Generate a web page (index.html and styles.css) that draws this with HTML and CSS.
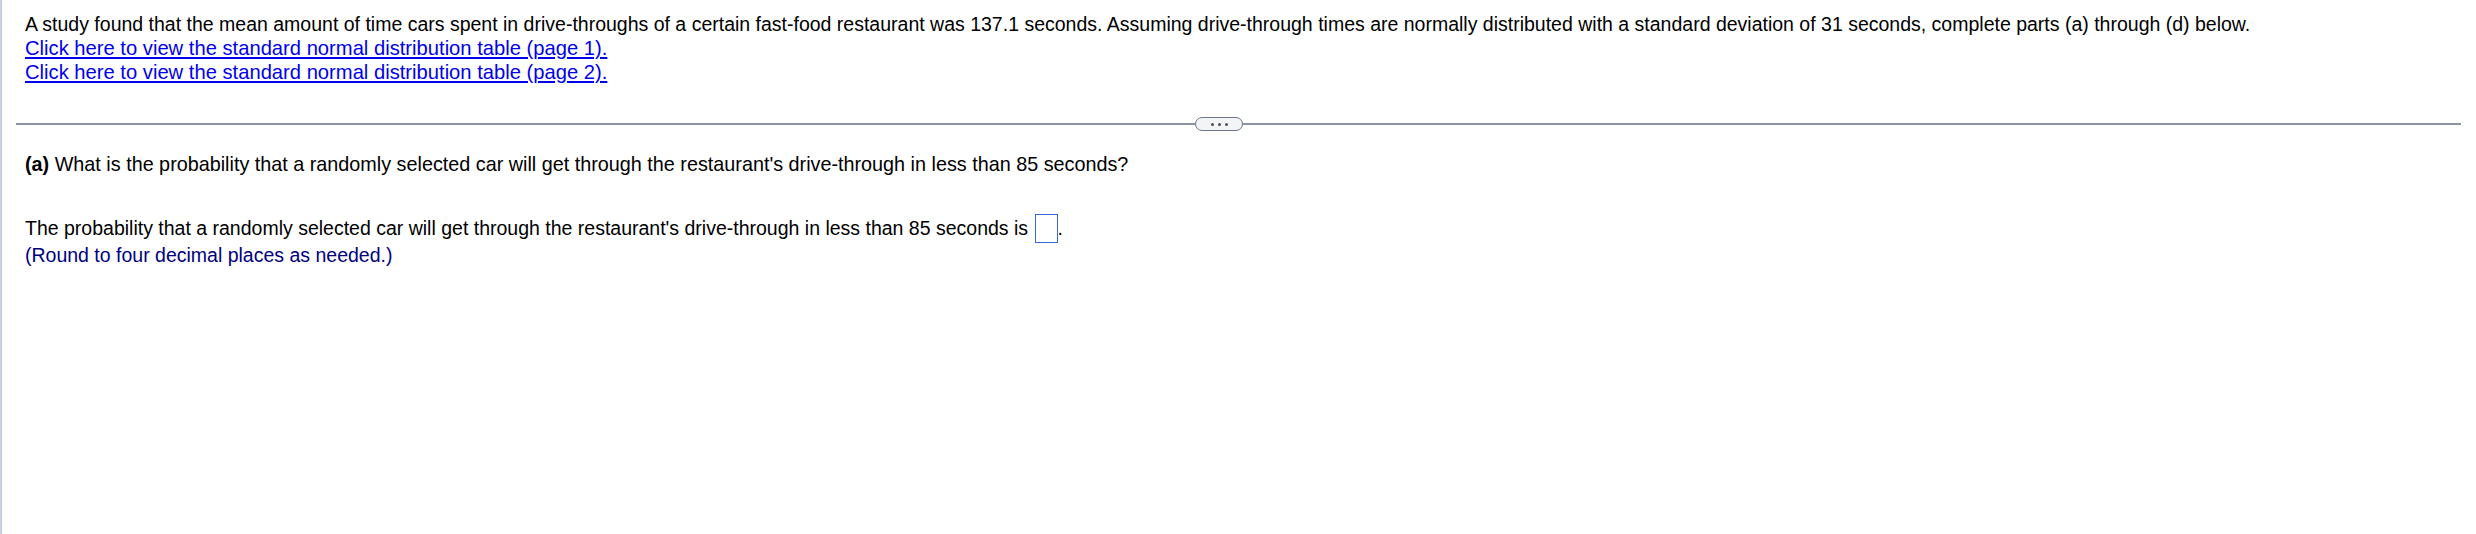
FILE: index.html
```html
<!DOCTYPE html>
<html>
<head>
<meta charset="utf-8">
<link rel="stylesheet" href="styles.css">
</head>
<body>
<div class="page">
  <div class="intro">
    <p class="stem">A study found that the mean amount of time cars spent in drive-throughs of a certain fast-food restaurant was 137.1 seconds. Assuming drive-through times are normally distributed with a standard deviation of 31 seconds, complete parts (a) through (d) below.</p>
    <a class="link" href="#">Click here to view the standard normal distribution table (page 1).</a>
    <a class="link" href="#">Click here to view the standard normal distribution table (page 2).</a>
  </div>
  <div class="divider">
    <span class="rule rule-left"></span>
    <span class="pill"><span class="dot"></span><span class="dot"></span><span class="dot"></span></span>
    <span class="rule rule-right"></span>
  </div>
  <div class="part">
    <p class="question"><b>(a)</b> What is the probability that a randomly selected car will get through the restaurant's drive-through in less than 85 seconds?</p>
    <p class="answer">The probability that a randomly selected car will get through the restaurant's drive-through in less than 85 seconds is <span class="box"></span>.</p>
    <p class="hint">(Round to four decimal places as needed.)</p>
  </div>
</div>
</body>
</html>
```
FILE: styles.css
```css
html, body {
  margin: 0;
  padding: 0;
  background: #ffffff;
}
body {
  font-family: "Liberation Sans", Arial, sans-serif;
  font-size: 19.5px;
  color: #000000;
}
.page {
  min-height: 534px;
  box-sizing: border-box;
  border-left: 2px solid #c9cde0;
  padding: 12px 15px 0 0;
}
.intro {
  padding-left: 23px;
  display: flex;
  flex-direction: column;
  line-height: 24px;
}
.stem {
  margin: 0;
}
.link {
  font-size: 20.2px;
  color: #0000ee;
  text-decoration: underline;
  align-self: flex-start;
}
.divider {
  display: flex;
  align-items: center;
  margin: 33px 0 0 14px;
  height: 14px;
}
.rule {
  height: 1.5px;
  background: #8c94a8;
}
.rule-left {
  width: 1179px;
}
.rule-right {
  flex: 1;
}
.pill {
  box-sizing: border-box;
  width: 48px;
  height: 14px;
  border: 1.5px solid #6b7489;
  border-radius: 7px;
  background: #f3f4f6;
  display: flex;
  align-items: center;
  justify-content: center;
  gap: 4px;
}
.dot {
  width: 3px;
  height: 3px;
  border-radius: 50%;
  background: #4a5060;
}
.part {
  padding-left: 23px;
  margin-top: 21px;
}
.question {
  margin: 0;
  font-size: 19.8px;
  line-height: 24px;
}
.answer {
  margin: 38px 0 0 0;
  line-height: 28px;
}
.box {
  display: inline-block;
  box-sizing: border-box;
  width: 23px;
  height: 29px;
  border: 1.5px solid #3a68d0;
  vertical-align: -8px;
  margin-left: 1px;
}
.hint {
  margin: 0;
  line-height: 24px;
  color: #000080;
}
```
